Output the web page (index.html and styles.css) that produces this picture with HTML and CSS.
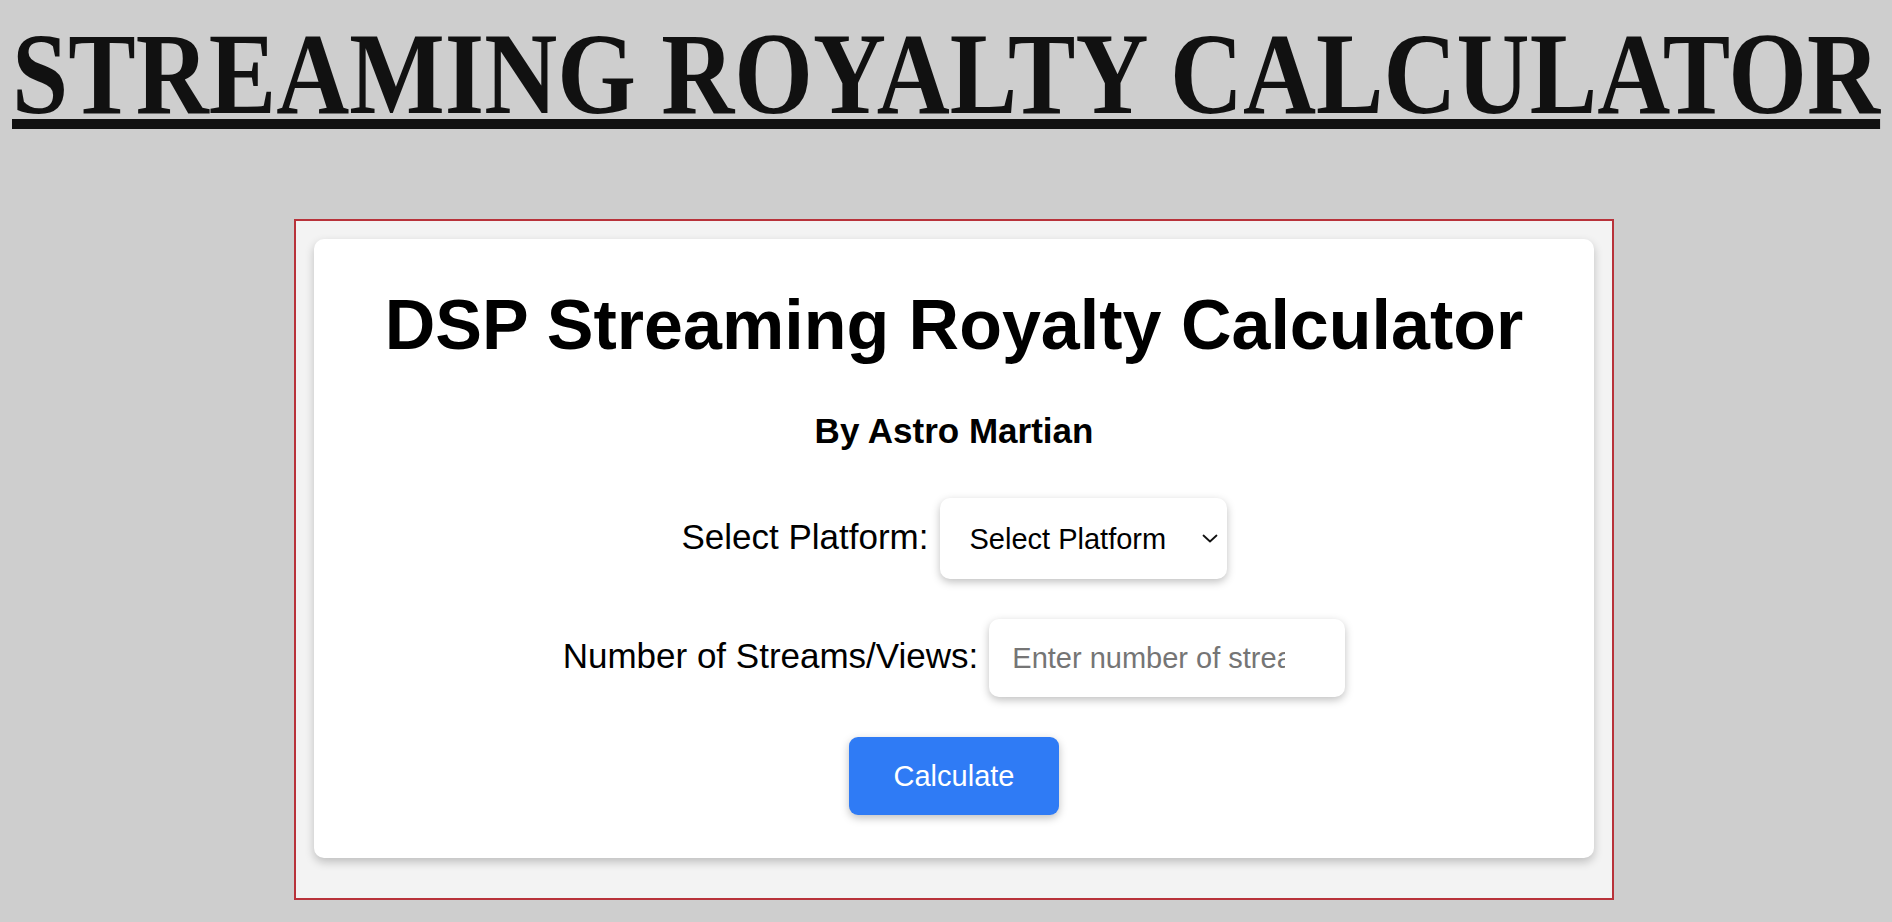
FILE: index.html
```html
<!DOCTYPE html>
<html lang="en">
<head>
<meta charset="utf-8">
<title>Streaming Royalty Calculator</title>
<link rel="stylesheet" href="styles.css">
</head>
<body>
<header class="site-header">
  <h1 class="site-title">STREAMING ROYALTY CALCULATOR</h1>
</header>
<main class="frame-wrap">
  <section class="frame">
    <div class="card">
      <h2 class="card-title">DSP Streaming Royalty Calculator</h2>
      <p class="byline">By Astro Martian</p>
      <div class="field">
        <label class="field-label" for="platform">Select Platform:</label>
        <div class="select-wrap">
          <select id="platform" class="select">
            <option>Select Platform</option>
            <option>Spotify</option>
            <option>Apple Music</option>
            <option>YouTube</option>
            <option>Amazon Music</option>
            <option>Tidal</option>
          </select>
          <svg class="chevron" width="16" height="9" viewBox="0 0 16 9" aria-hidden="true"><path d="M1.5 1.5 L8 7.5 L14.5 1.5" fill="none" stroke="#111" stroke-width="1.8" stroke-linecap="round" stroke-linejoin="round"/></svg>
        </div>
      </div>
      <div class="field">
        <label class="field-label" for="streams">Number of Streams/Views:</label>
        <input id="streams" class="text-input" type="number" placeholder="Enter number of streams/views">
      </div>
      <button class="calc-btn" type="button">Calculate</button>
    </div>
  </section>
</main>
</body>
</html>
```
FILE: styles.css
```css
html, body {
  margin: 0;
  padding: 0;
}

body {
  background: #cecece;
  font-family: "Liberation Sans", Arial, Helvetica, sans-serif;
  color: #000;
  overflow: hidden;
}

.site-header {
  padding: 15px 0 0 12px;
  height: 117px;
}

.site-title {
  display: block;
  width: max-content;
  margin: 0;
  font-family: "Liberation Serif", "Times New Roman", serif;
  font-weight: 700;
  font-size: 117px;
  line-height: 1;
  color: #111;
  white-space: nowrap;
  text-decoration: underline;
  text-decoration-thickness: 10px;
  text-underline-offset: 6px;
  transform: scaleX(0.8646);
  transform-origin: left top;
}

.frame-wrap {
  display: flex;
  justify-content: center;
  padding-left: 16px;
  margin-top: 87px;
}

.frame {
  width: 1320px;
  box-sizing: border-box;
  border: 2px solid #b8323a;
  background: #f3f3f3;
  padding: 18px 18px 40px;
}

.card {
  background: #fff;
  border-radius: 10px;
  box-shadow: 0 4px 10px rgba(0, 0, 0, 0.22);
  padding: 46px 20px 43px;
  display: flex;
  flex-direction: column;
  align-items: center;
}

.card-title {
  margin: 0;
  font-size: 70px;
  line-height: 80px;
  font-weight: 700;
}

.byline {
  margin: 46px 0 0;
  font-size: 35px;
  line-height: 40px;
  font-weight: 700;
}

.field {
  display: flex;
  align-items: baseline;
  justify-content: center;
  margin-top: 40px;
}

.byline + .field {
  margin-top: 47px;
}

.field-label {
  font-size: 35px;
  margin-right: 11px;
}

.select-wrap {
  position: relative;
  display: inline-flex;
}

.select {
  appearance: none;
  -webkit-appearance: none;
  width: 287px;
  height: 81px;
  box-sizing: border-box;
  border: none;
  border-radius: 10px;
  background: #fff;
  box-shadow: 0 3px 8px rgba(0, 0, 0, 0.25);
  padding: 0 40px 0 30px;
  font-family: inherit;
  font-size: 29px;
  color: #000;
  outline: none;
}

.chevron {
  position: absolute;
  right: 9px;
  top: 36px;
  pointer-events: none;
}

.text-input {
  -moz-appearance: textfield;
  appearance: textfield;
  width: 356px;
  height: 78px;
  box-sizing: border-box;
  border: none;
  border-radius: 10px;
  background: #fff;
  box-shadow: 0 3px 8px rgba(0, 0, 0, 0.25);
  padding: 0 60px 0 23px;
  font-family: inherit;
  font-size: 29px;
  outline: none;
}

.text-input::-webkit-outer-spin-button,
.text-input::-webkit-inner-spin-button {
  -webkit-appearance: none;
  margin: 0;
}

.text-input::placeholder {
  color: #757575;
}

.calc-btn {
  margin-top: 40px;
  width: 210px;
  height: 78px;
  border: none;
  border-radius: 9px;
  background: #2f7bf5;
  color: #fff;
  font-family: inherit;
  font-size: 29px;
  box-shadow: 0 3px 8px rgba(0, 0, 0, 0.25);
  cursor: pointer;
}
```
